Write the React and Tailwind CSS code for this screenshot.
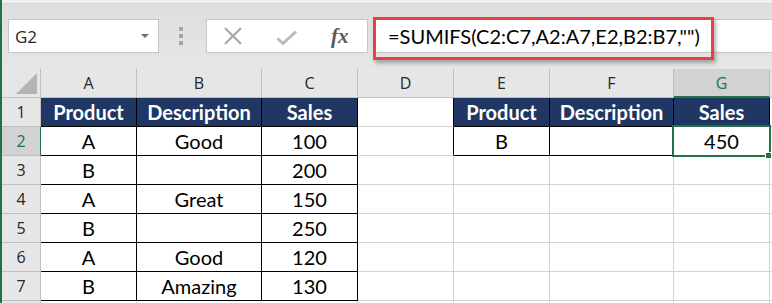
import React from "react";

const F = "font-['Lato',sans-serif]";
const HF = "font-['Open_Sans',sans-serif]";

function Cell({ children, cls }) {
  return (
    <div className={`flex items-center justify-center border-r border-b text-[20px] leading-none ${F} ${cls}`}>
      {children}
    </div>
  );
}

function ColHead({ children, cls }) {
  return (
    <div className={`flex items-center justify-center border-r border-b text-[16px] leading-none ${HF} ${cls}`}>
      {children}
    </div>
  );
}

function RowHead({ children, cls }) {
  return (
    <div className={`flex items-center justify-center border-r border-b text-[16px] leading-none ${HF} ${cls}`}>
      {children}
    </div>
  );
}

const W = "bg-white border-[#d4d4d4] text-black";
const B = "bg-white border-black text-black";
const H = "bg-[#203764] border-black text-white font-bold";
const DB = "bg-white border-r-black border-b-[#d4d4d4]";
const RH = "bg-[#e6e6e6] border-[#bfbfbf] text-[#262626]";

const body = [
  ["A", "Good", "100"],
  ["B", "", "200"],
  ["A", "Great", "150"],
  ["B", "", "250"],
  ["A", "Good", "120"],
  ["B", "Amazing", "130"],
];

export default function App() {
  return (
    <div className="relative w-[772px] h-[303px] overflow-hidden bg-[#e6e6e6] flex">
      <div className="w-[2px] shrink-0 bg-[#217346]" />
      <div className="flex-1 flex flex-col min-w-0">
        {/* Formula bar area */}
        <div className="relative h-[69px] shrink-0 flex flex-col bg-gradient-to-b from-[#dedede] to-[#e6e6e6]">
          <div className="h-[4px] bg-[#f1f1f1] border-b border-[#d6d6d6]" />
          <div className="flex items-start pt-[15px] pl-[6px]">
            <div className="w-[151px] h-[34px] bg-white border border-[#c6c6c6] flex items-center pl-[6px] pr-[9px]">
              <span className={`${HF} text-[17px] text-[#262626] leading-none`}>G2</span>
              <div className="ml-auto w-0 h-0 border-l-[4px] border-r-[4px] border-t-[4px] border-l-transparent border-r-transparent border-t-[#6e6e6e]" />
            </div>
            <div className="ml-[20px] mt-[8px] flex flex-col gap-[3px]">
              <div className="w-[4px] h-[4px] bg-[#a6a6a6]" />
              <div className="w-[4px] h-[4px] bg-[#a6a6a6]" />
              <div className="w-[4px] h-[4px] bg-[#a6a6a6]" />
            </div>
            <div className="ml-[23px] w-[162px] h-[34px] bg-white border border-[#c6c6c6] flex items-center">
              <svg width="20" height="20" viewBox="0 0 20 20" className="ml-[16px]">
                <path d="M2 2 L18 18 M18 2 L2 18" stroke="#a8a8a8" strokeWidth="2.2" fill="none" />
              </svg>
              <svg width="22" height="16" viewBox="0 0 22 16" className="ml-[33px] mt-[3px]">
                <path d="M1.5 8.5 L7 13.5 L20 1.5" stroke="#b9b9b9" strokeWidth="3" fill="none" />
              </svg>
              <span className="ml-[33px] font-['Liberation_Serif',serif] italic font-bold text-[21px] text-[#5a5a5a] leading-none">
                fx
              </span>
            </div>
            <div className="ml-[6px] flex-1 h-[34px] bg-white border-y border-[#c6c6c6] flex items-center pl-[14px]">
              <span className={`${F} text-[20px] text-black leading-none`}>=SUMIFS(C2:C7,A2:A7,E2,B2:B7,"")</span>
            </div>
          </div>
          <div className="absolute left-[371px] top-[17px] w-[341px] h-[43px] border-[3px] border-[#ea3f45] shadow-[2px_3px_4px_rgba(0,0,0,0.3)]" />
        </div>

        {/* Grid */}
        <div className="relative flex-1 grid grid-cols-[39px_96px_125px_96px_96px_96px_124px_96px_1fr] grid-rows-[29px_29px_29px_29px_29px_29px_29px_29px_29px]">
          {/* column header row */}
          <div className="relative border-r border-b bg-[#e6e6e6] border-[#bfbfbf]">
            <svg width="21" height="21" viewBox="0 0 21 21" className="absolute right-[3px] bottom-[3px]">
              <path d="M21 0 L21 21 L0 21 Z" fill="#b4b4b4" />
            </svg>
          </div>
          <ColHead cls={RH}>A</ColHead>
          <ColHead cls={RH}>B</ColHead>
          <ColHead cls={RH}>C</ColHead>
          <ColHead cls={RH}>D</ColHead>
          <ColHead cls={RH}>E</ColHead>
          <ColHead cls={RH}>F</ColHead>
          <ColHead cls="bg-[#d2d2d2] border-r-[#bfbfbf] border-b-2 border-b-[#217346] text-[#217346]">G</ColHead>
          <div className="border-b bg-[#e6e6e6] border-[#bfbfbf]" />

          {/* row 1 */}
          <RowHead cls={RH}>1</RowHead>
          <Cell cls={H}>Product</Cell>
          <Cell cls={H}>Description</Cell>
          <Cell cls={H}>Sales</Cell>
          <Cell cls={DB} />
          <Cell cls={H}>Product</Cell>
          <Cell cls={H}>Description</Cell>
          <Cell cls={H}>Sales</Cell>
          <div className="bg-white border-b border-[#d4d4d4]" />

          {/* rows 2-7 */}
          {body.map((r, i) => {
            const n = i + 2;
            return (
              <React.Fragment key={n}>
                {n === 2 ? (
                  <RowHead cls="bg-[#d2d2d2] border-r-[#217346] border-b-[#bfbfbf] text-[#217346]">2</RowHead>
                ) : (
                  <RowHead cls={RH}>{n}</RowHead>
                )}
                <Cell cls={B}>{r[0]}</Cell>
                <Cell cls={B}>{r[1]}</Cell>
                <Cell cls={B}>{r[2]}</Cell>
                {n === 2 ? <Cell cls={DB} /> : <Cell cls={W} />}
                {n === 2 ? (
                  <>
                    <Cell cls={B}>B</Cell>
                    <Cell cls={B} />
                    <Cell cls={B}>450</Cell>
                  </>
                ) : (
                  <>
                    <Cell cls={W} />
                    <Cell cls={W} />
                    <Cell cls={W} />
                  </>
                )}
                <div className="bg-white border-b border-[#d4d4d4]" />
              </React.Fragment>
            );
          })}

          {/* row 8 partial */}
          <RowHead cls={RH} />
          <Cell cls={W} />
          <Cell cls={W} />
          <Cell cls={W} />
          <Cell cls={W} />
          <Cell cls={W} />
          <Cell cls={W} />
          <Cell cls={W} />
          <div className="bg-white" />

          {/* selection */}
          <div className="absolute left-[670px] top-[56px] w-[99px] h-[32px] border-2 border-[#217346] pointer-events-none" />
          <div className="absolute left-[763px] top-[83px] w-[7px] h-[7px] bg-[#217346] border border-white" />
        </div>
      </div>
    </div>
  );
}
